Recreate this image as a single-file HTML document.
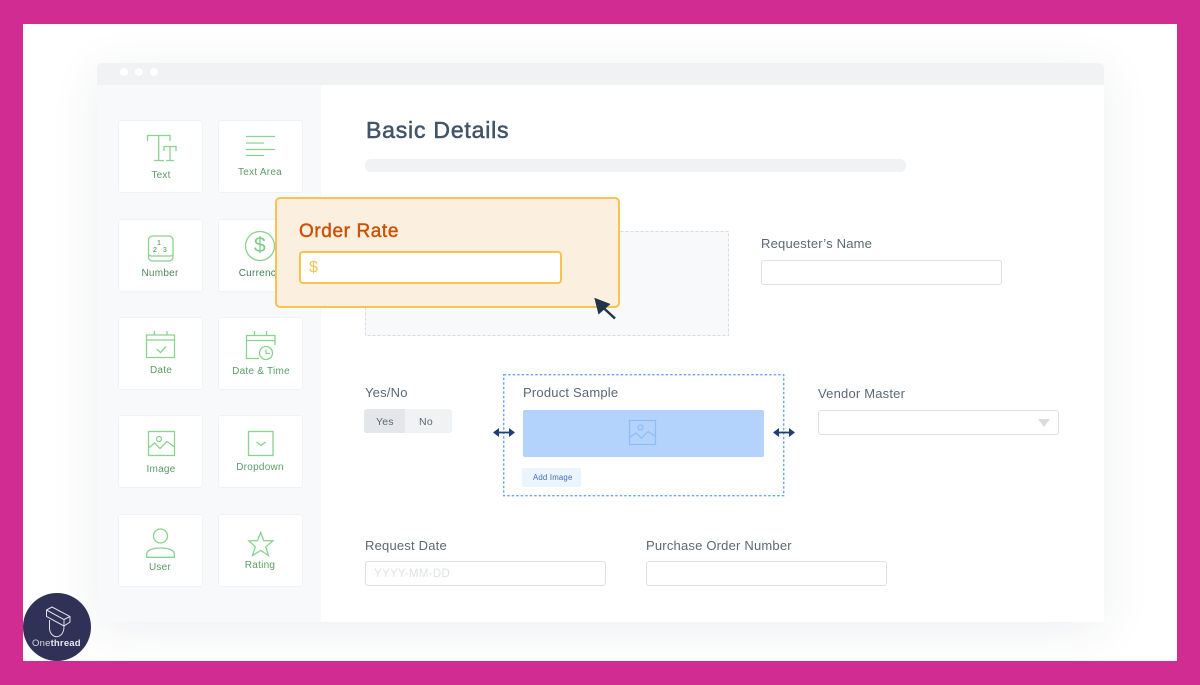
<!DOCTYPE html>
<html><head><meta charset="utf-8"><style>
html,body{margin:0;padding:0}
body{width:1200px;height:685px;position:relative;overflow:hidden;background:#d02c92;font-family:"Liberation Sans",sans-serif}
div{position:absolute;box-sizing:border-box}
.t{white-space:nowrap;line-height:1}
.card{background:#fff;border:1px solid #f1f2f5;border-radius:3px;width:85px;height:73px}
.c{color:#5a9c66;font-size:10px;letter-spacing:.25px;transform:translateX(-50%)}
.l{color:#5b6875;font-size:13px;letter-spacing:.2px}
.inp{background:#fff;border:1.5px solid #dce1e6;border-radius:3px;height:25px;width:241px}
svg{position:absolute;left:0;top:0}
</style></head><body>
<div style="left:23px;top:24px;width:1154px;height:637px;background:#fff;overflow:hidden">
<div style="left:74px;top:39px;width:1007px;height:559px;background:#fff;box-shadow:0 8px 50px rgba(40,50,80,.08);border-radius:5px 5px 0 0"></div>
</div>
<div style="left:97px;top:63px;width:1007px;height:22px;background:#f1f2f4;border-radius:5px 5px 0 0"></div>
<div style="left:120px;top:68px;width:8px;height:8px;border-radius:50%;background:#fff"></div>
<div style="left:135px;top:68px;width:8px;height:8px;border-radius:50%;background:#fff"></div>
<div style="left:150px;top:68px;width:8px;height:8px;border-radius:50%;background:#fff"></div>
<div style="left:97px;top:85px;width:224px;height:537px;background:#f8f9fb"></div>

<div class="card" style="left:118px;top:120px"></div><div class="card" style="left:218px;top:120px"></div>
<div class="card" style="left:118px;top:219px"></div><div class="card" style="left:218px;top:219px"></div>
<div class="card" style="left:118px;top:317px"></div><div class="card" style="left:218px;top:317px"></div>
<div class="card" style="left:118px;top:415px"></div><div class="card" style="left:218px;top:415px"></div>
<div class="card" style="left:118px;top:514px"></div><div class="card" style="left:218px;top:514px"></div>

<div class="t c" style="left:161px;top:171px">Text</div>
<div class="t c" style="left:260px;top:168px">Text Area</div>
<div class="t c" style="left:160px;top:269px;color:#4d8a5a">Number</div>
<div class="t c" style="left:260px;top:269px;color:#3f7f5a">Currency</div>
<div class="t c" style="left:161px;top:366px">Date</div>
<div class="t c" style="left:261px;top:367px">Date &amp; Time</div>
<div class="t c" style="left:161px;top:465px">Image</div>
<div class="t c" style="left:260px;top:463px">Dropdown</div>
<div class="t c" style="left:160px;top:563px">User</div>
<div class="t c" style="left:260px;top:561px">Rating</div>

<svg width="1200" height="685" fill="none" stroke="#8ad28f" stroke-width="1.300">
<path d="M147.500 141V135.500H170V141M158.700 135.500V160.500M154 160.500H164M164 151V146.500H176V151M170 146.500V160.500M166 160.500H174"/>
<path d="M246 136.500H275M246 143H264M246 149.500H275M246 155.500H264"/>
<rect x="148.500" y="236" width="24.500" height="25" rx="4"/><path d="M148.500 254.500Q149 256 152 256H170Q173 256 173 254.500"/>
<circle cx="260" cy="246" r="14.500"/>
<path d="M146.500 335H174.500V357.500H146.500ZM146.500 340H174.500M154.500 331V335M167 331V335M156.500 349L160.500 352.500L166 346.500"/>
<path d="M275 345V335.500H246.500V358.500H259M246.500 340.500H275M254.500 331V335.500M266.500 331V335.500"/>
<circle cx="266" cy="353" r="6.500"/><path d="M266 349.500V353.500H270"/>
<rect x="148.500" y="431.500" width="26" height="24"/><circle cx="159" cy="439" r="2.500"/><path d="M148.500 448L154.500 443L160 448.500L167 441.500L174.500 447"/>
<rect x="248.500" y="431.500" width="24.500" height="24"/><path d="M256.500 442L261 445.500L265.500 442"/>
<circle cx="160.500" cy="536" r="7"/><path d="M146.800 557.300V553.500C147 550.500 152 548 160.500 548S174 550.500 174.300 553.500V557.300Z"/>
<path d="M260.700 532.500L263.700 540.700L273 540.900L265.800 546.800L268.500 555.500L260.700 550.500L252.500 555.500L255.300 546.800L248.800 540.900L257.500 540.700Z"/>
</svg>
<div class="t" style="left:157px;top:240px;font-size:7px;color:#6fb47a;font-weight:bold">1</div>
<div class="t" style="left:153px;top:247px;font-size:7px;color:#6fb47a;font-weight:bold">2</div>
<div class="t" style="left:163px;top:247px;font-size:7px;color:#6fb47a;font-weight:bold">3</div>
<div class="t" style="left:254px;top:235px;font-size:21px;color:#7fcb86">$</div>

<div class="t" style="left:366px;top:119px;font-size:23px;color:#42546a;letter-spacing:.8px;-webkit-text-stroke:.55px #42546a">Basic Details</div>
<div style="left:365px;top:159px;width:541px;height:13px;border-radius:6px;background:#f1f2f4"></div>

<div style="left:365px;top:231px;width:364px;height:105px;background:#f8f9fb"></div>
<svg width="1200" height="685" fill="none">
<rect x="365.500" y="231.500" width="363" height="104" stroke="#d8dce1" stroke-width="1" stroke-dasharray="3 2"/>
</svg>
<div class="t l" style="left:761px;top:237px">Requester’s Name</div>
<div class="inp" style="left:761px;top:260px"></div>

<div style="left:275px;top:197px;width:345px;height:111px;background:#fbf0e0;border:2px solid #fcc24e;border-radius:5px"></div>
<div class="t" style="left:299px;top:222px;font-size:19px;color:#cf5000;letter-spacing:.6px;-webkit-text-stroke:.45px #cf5000">Order Rate</div>
<div style="left:299px;top:251px;width:263px;height:33px;background:#fff;border:2px solid #fcc24e;border-radius:4px"></div>
<div class="t" style="left:309px;top:260px;font-size:16px;color:#fcc24e">$</div>
<svg width="1200" height="685"><path d="M594.300 297.700L610.500 304L598.500 314.500Z" fill="#20354a"/><path d="M602.500 307L615 318.500" stroke="#20354a" stroke-width="2.500"/></svg>

<div class="t l" style="left:365px;top:386px">Yes/No</div>
<div style="left:364px;top:409px;width:88px;height:24px;background:#f1f2f4;border-radius:3px"></div>
<div style="left:364px;top:409px;width:41px;height:24px;background:#e4e6e9;border-radius:3px 0 0 3px"></div>
<div class="t" style="left:376px;top:417px;font-size:10.500px;color:#5b6875;letter-spacing:.2px">Yes</div>
<div class="t" style="left:419px;top:417px;font-size:10.500px;color:#5b6875;letter-spacing:.3px">No</div>

<svg width="1200" height="685" fill="none">
<rect x="503.700" y="374.700" width="280" height="121" stroke="#6aa5f5" stroke-width="1.400" stroke-dasharray="2.500 2"/>
</svg>
<div class="t l" style="left:523px;top:386px">Product Sample</div>
<div style="left:523px;top:410px;width:241px;height:47px;background:#b3d3fd;border-radius:2px"></div>
<svg width="1200" height="685" fill="none" stroke="#8fbcf8" stroke-width="1.200">
<rect x="629.500" y="420.500" width="26" height="24"/><circle cx="640.500" cy="427.500" r="2.500"/><path d="M629.500 437.500L636 433L641.500 438L648 431.500L655.500 436.500"/>
</svg>
<div style="left:522px;top:468px;width:59px;height:19px;background:#ecf4fe;border-radius:2px"></div>
<div class="t" style="left:533px;top:474px;font-size:7.800px;color:#3e6fb8;letter-spacing:.2px">Add Image</div>
<svg width="1200" height="685" fill="#1d3f73" stroke="#1d3f73" stroke-width="1.800">
<path d="M497 432.500H511"/><path d="M493 432.500L499 428V437ZM515 432.500L509 428V437Z" stroke="none"/>
<path d="M777 432.500H791"/><path d="M773 432.500L779 428V437ZM795 432.500L789 428V437Z" stroke="none"/>
</svg>

<div class="t l" style="left:818px;top:387px">Vendor Master</div>
<div class="inp" style="left:818px;top:410px"></div>
<svg width="1200" height="685"><path d="M1038 419H1050L1044 427Z" fill="#d9dde1"/></svg>

<div class="t l" style="left:365px;top:539px">Request Date</div>
<div class="inp" style="left:365px;top:561px"></div>
<div class="t" style="left:374px;top:569px;font-size:11.500px;color:#dfe2e6;letter-spacing:.3px">YYYY-MM-DD</div>
<div class="t l" style="left:646px;top:539px">Purchase Order Number</div>
<div class="inp" style="left:646px;top:561px"></div>

<div style="left:23px;top:593px;width:68px;height:68px;border-radius:50%;background:#2f3156"></div>
<svg width="1200" height="685" fill="none" stroke="#dfe0e8" stroke-width="1">
<path d="M46.500 610L52 607L70 616.500V622L64 626L46.500 616.500ZM46.500 610L64 619.500V626M64 619.500L70 616.500"/>
<path d="M49.500 620V628C49.500 634 54 637.500 58 636.500C61.500 635.500 64 632 64 626"/>
</svg>
<div class="t" style="left:32px;top:639px;font-size:9.500px;color:#d8d9e3;letter-spacing:.2px">One<b style="color:#e9eaf0">thread</b></div>
</body></html>
